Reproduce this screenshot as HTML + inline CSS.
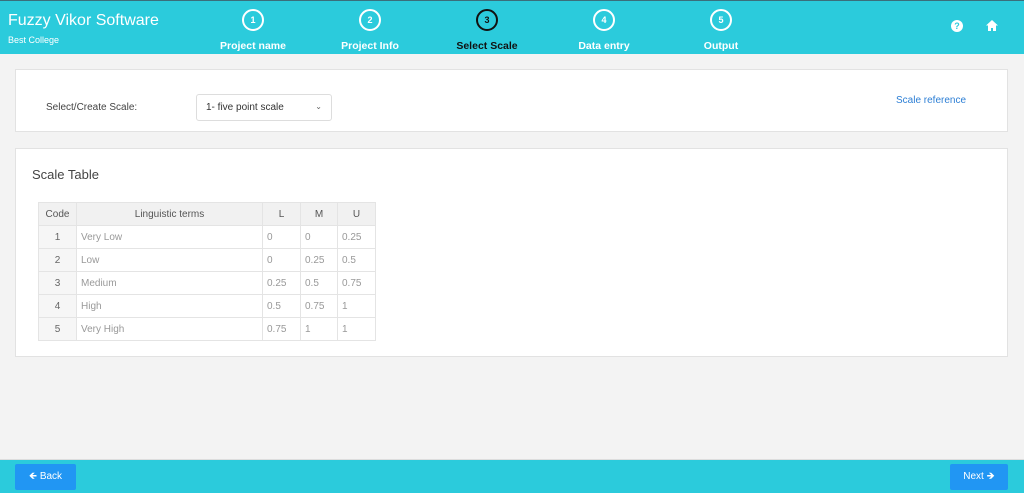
<!DOCTYPE html>
<html><head><meta charset="utf-8"><style>
*{box-sizing:border-box;margin:0;padding:0}
body{width:1024px;height:493px;overflow:hidden;background:#f3f3f3;font-family:"Liberation Sans",Arial,sans-serif;position:relative}
.hdr{position:absolute;left:0;top:0;width:1024px;height:54px;background:#2bcbdc;border-top:1px solid #3a6f7c}
.title{position:absolute;left:8px;top:11px;color:#fff;font-size:16px}
.sub{position:absolute;left:8px;top:34px;color:#fff;font-size:9px}
.step{position:absolute;top:8px;width:120px;margin-left:-60px;text-align:center;color:#fff;font-size:10.5px;font-weight:bold}
.step .c{width:22px;height:22px;border:2px solid #fff;border-radius:50%;margin:0 auto 9px;font-size:9px;line-height:18px}
.step.act{color:#111}.step.act .c{border-color:#111}
.card{position:absolute;left:15px;width:993px;background:#fff;border:1px solid #e2e2e2}
table{position:absolute;left:22px;top:53px;border-collapse:collapse;font-size:10px}
td,th{border:1px solid #e4e4e4;height:23px;color:#999;font-weight:normal;text-align:left;padding-left:4px}
th{background:#f1f1f1;color:#555;text-align:center;padding:0}
td.n{background:#f6f6f6;color:#666;text-align:center;padding:0}
.ftr{position:absolute;left:0;top:459px;width:1024px;height:34px;background:#2bcbdc;border-top:1px solid #ddd}
.btn{position:absolute;top:4px;height:26px;background:#2196f3;color:#fff;font-size:10px;line-height:26px;text-align:center;border-radius:2px}
</style></head><body>
<div class="hdr">
<div class="title">Fuzzy Vikor Software</div><div class="sub">Best College</div>
<div class="step" style="left:253px"><div class="c">1</div>Project name</div>
<div class="step" style="left:370px"><div class="c">2</div>Project Info</div>
<div class="step act" style="left:487px"><div class="c">3</div>Select Scale</div>
<div class="step" style="left:604px"><div class="c">4</div>Data entry</div>
<div class="step" style="left:721px"><div class="c">5</div>Output</div>
<div style="position:absolute;left:951px;top:19px;width:12px;height:12px;border-radius:50%;background:#fff;color:#2bcbdc;font-size:9px;font-weight:bold;text-align:center;line-height:12px">?</div>
<svg style="position:absolute;left:985px;top:18px" width="14" height="13" viewBox="0 0 14 13"><path d="M7 1L1 6.5h2V12h3V9h2v3h3V6.5h2z" fill="#fff"/></svg>
</div>
<div class="card" style="top:69px;height:63px">
<div style="position:absolute;left:30px;top:32px;font-size:10px;color:#444">Select/Create Scale:</div>
<div style="position:absolute;left:180px;top:24px;width:136px;height:27px;border:1px solid #ddd;border-radius:3px;font-size:10px;color:#333;line-height:25px;padding-left:9px">1- five point scale<span style="position:absolute;right:9px;top:-1px;font-size:8px;color:#666">⌄</span></div>
<div style="position:absolute;left:880px;top:25px;font-size:10px;color:#2d7fd5">Scale reference</div>
</div>
<div class="card" style="top:148px;height:209px">
<div style="position:absolute;left:16px;top:18px;font-size:13px;color:#444">Scale Table</div>
<table>
<tr><th style="width:38px">Code</th><th style="width:186px">Linguistic terms</th><th style="width:38px">L</th><th style="width:37px">M</th><th style="width:38px">U</th></tr>
<tr><td class="n">1</td><td>Very Low</td><td>0</td><td>0</td><td>0.25</td></tr>
<tr><td class="n">2</td><td>Low</td><td>0</td><td>0.25</td><td>0.5</td></tr>
<tr><td class="n">3</td><td>Medium</td><td>0.25</td><td>0.5</td><td>0.75</td></tr>
<tr><td class="n">4</td><td>High</td><td>0.5</td><td>0.75</td><td>1</td></tr>
<tr><td class="n">5</td><td>Very High</td><td>0.75</td><td>1</td><td>1</td></tr>
</table>
</div>
<div class="ftr">
<div class="btn" style="left:15px;width:61px">🡸 Back</div>
<div class="btn" style="left:950px;width:58px">Next 🡺</div>
</div>
</body></html>
